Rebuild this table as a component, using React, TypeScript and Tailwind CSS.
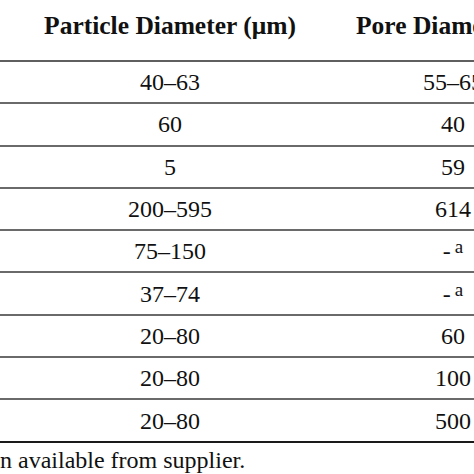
const rows: { size: string; pore: string; sup?: boolean }[] = [
  { size: "40–63", pore: "55–65" },
  { size: "60", pore: "40" },
  { size: "5", pore: "59" },
  { size: "200–595", pore: "614" },
  { size: "75–150", pore: "-", sup: true },
  { size: "37–74", pore: "-", sup: true },
  { size: "20–80", pore: "60" },
  { size: "20–80", pore: "100" },
  { size: "20–80", pore: "500" },
];

export default function App() {
  return (
    <div
      className="w-[474px] h-[474px] overflow-hidden bg-white text-[#111] text-[24px]"
      style={{ fontFamily: '"Liberation Serif", "Times New Roman", serif' }}
    >
      <div className="w-[600px]">
        {/* Header */}
        <div className="grid grid-cols-[340px_226px] h-[62px] border-b-2 border-[#5f5f5f] items-center pb-[8px] font-bold text-[25.5px]">
          <div className="text-center">Particle Diameter (μm)</div>
          <div className="text-center whitespace-nowrap pl-[16px]">Pore Diameter (nm)</div>
        </div>

        {/* Rows */}
        {rows.map((r, i) => (
          <div
            key={i}
            className={`grid grid-cols-[340px_226px] h-[42.3px] items-center border-b-2 ${
              i === rows.length - 1 ? "border-[#1a1a1a]" : "border-[#6a6a6a]"
            }`}
          >
            <div className="text-center leading-none">{r.size}</div>
            <div className="text-center leading-none">
              {r.pore}
              {r.sup && (
                <sup className="text-[19px] ml-[4px] relative -top-[6px]">a</sup>
              )}
            </div>
          </div>
        ))}

        {/* Footnote */}
        <div className="pt-[5px] leading-none">n available from supplier.</div>
      </div>
    </div>
  );
}
